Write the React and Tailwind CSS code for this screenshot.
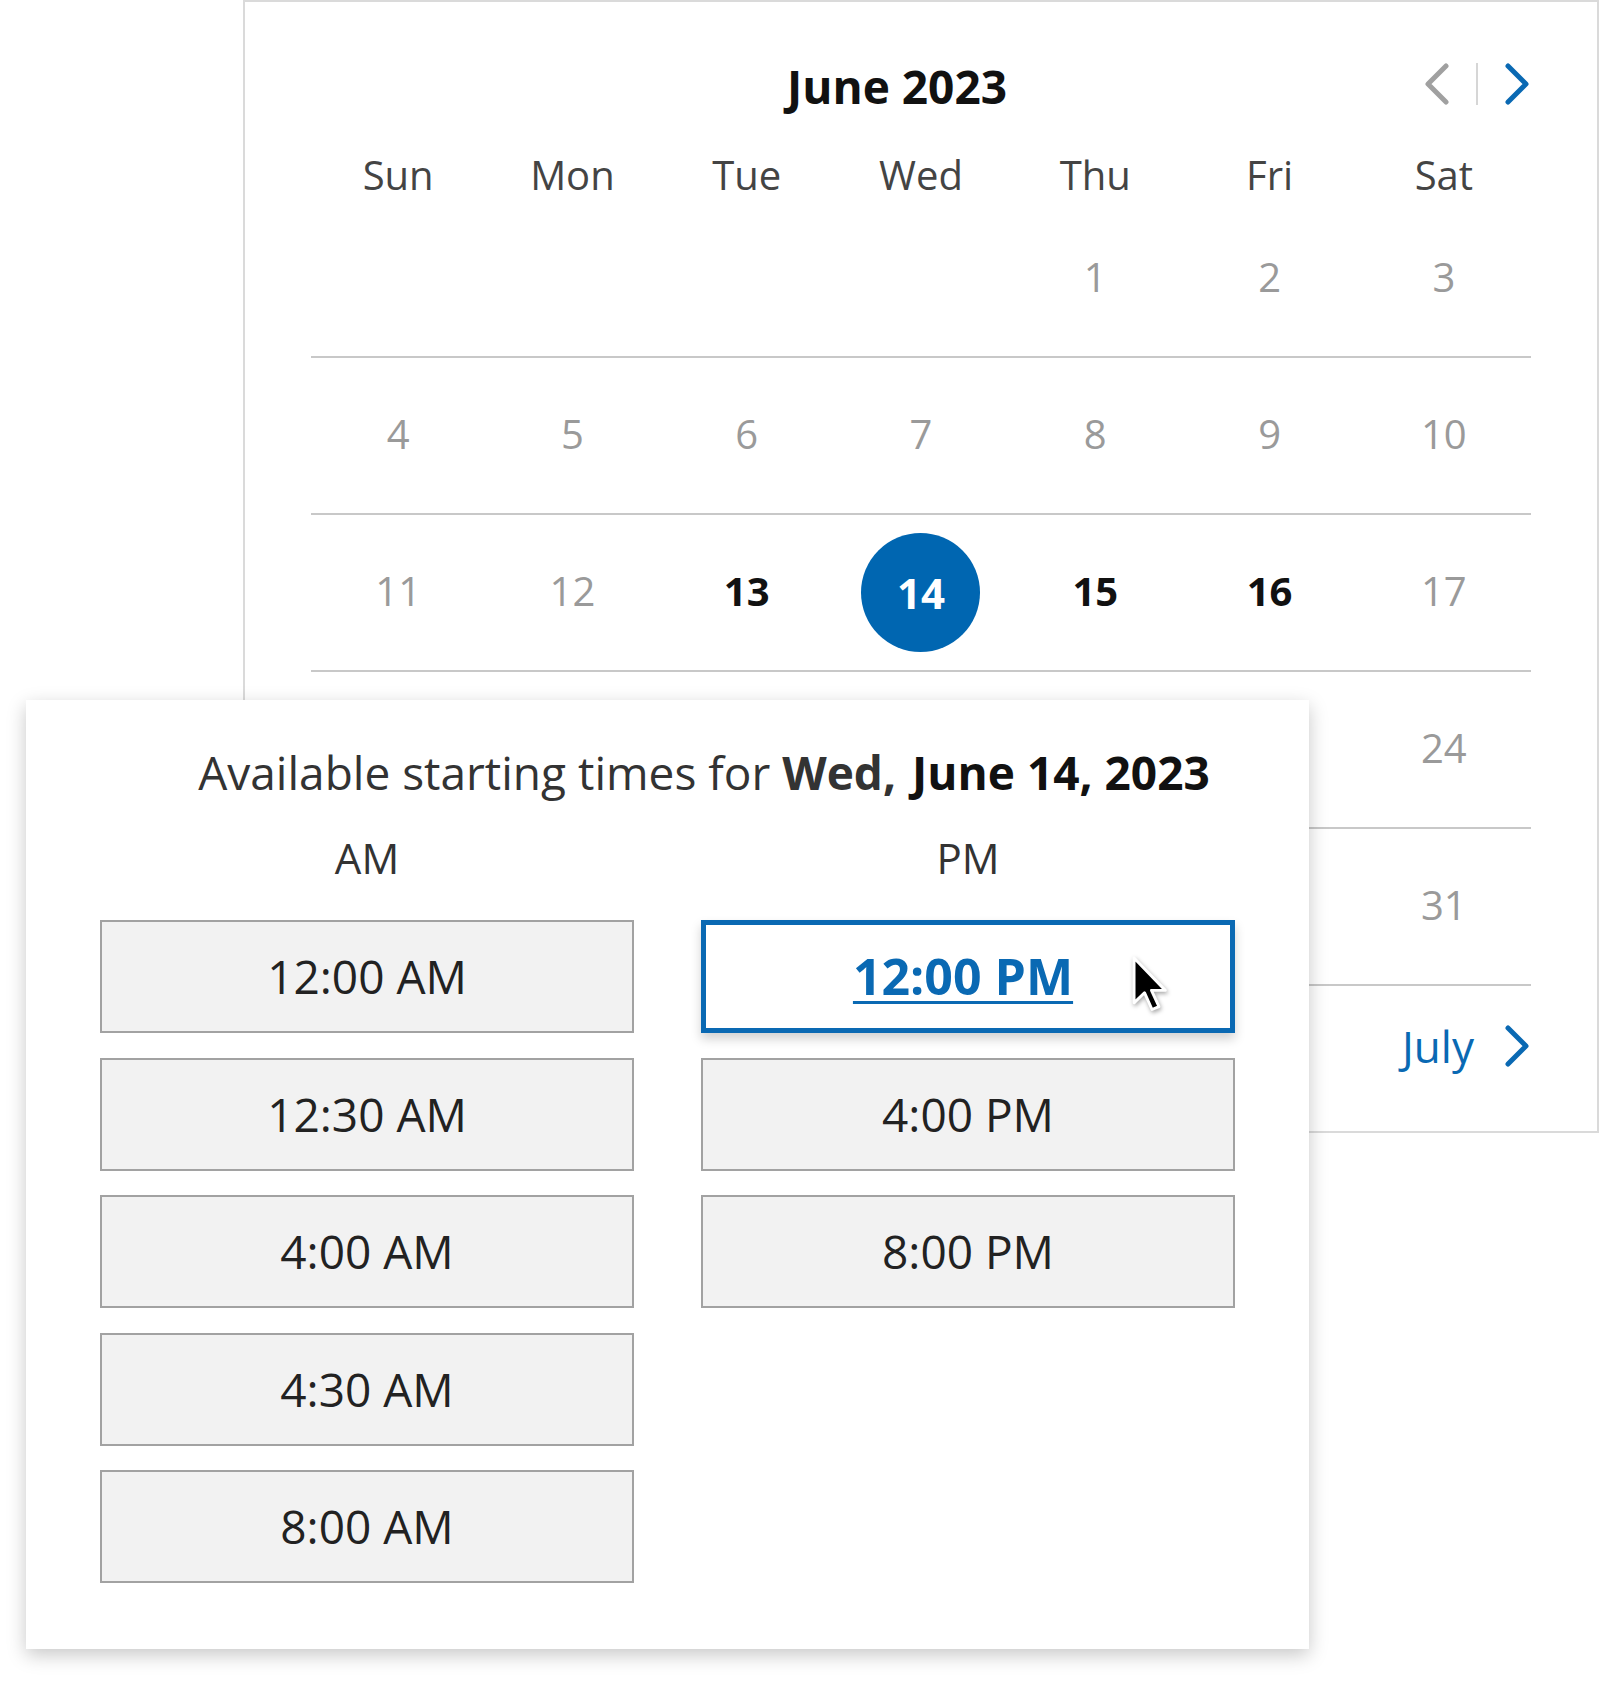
import React from 'react';

const DAYS = ['Sun', 'Mon', 'Tue', 'Wed', 'Thu', 'Fri', 'Sat'];

// null = empty cell (or covered by the popover); kind: 'off' (grey), 'open' (bold), 'sel' (selected)
const WEEKS = [
    [null, null, null, null, [1, 'off'], [2, 'off'], [3, 'off']],
    [[4, 'off'], [5, 'off'], [6, 'off'], [7, 'off'], [8, 'off'], [9, 'off'], [10, 'off']],
    [[11, 'off'], [12, 'off'], [13, 'open'], [14, 'sel'], [15, 'open'], [16, 'open'], [17, 'off']],
    [null, null, null, null, null, null, [24, 'off']],
    [null, null, null, null, null, null, [31, 'off']],
];

const AM_TIMES = ['12:00 AM', '12:30 AM', '4:00 AM', '4:30 AM', '8:00 AM'];
const PM_TIMES = ['12:00 PM', '4:00 PM', '8:00 PM'];

const Chevron = ({ dir = 'right', color }) => (
    <svg width="27" height="42" viewBox="0 0 27 42" fill="none">
        <path
            d={dir === 'right' ? 'M4 3 L22 21 L4 39' : 'M23 3 L5 21 L23 39'}
            stroke={color}
            strokeWidth="5"
            strokeLinecap="round"
            strokeLinejoin="round"
        />
    </svg>
);

const Cursor = () => (
    <svg width="38" height="58" viewBox="0 0 13 20" className="drop-shadow-[1px_2px_2px_rgba(0,0,0,0.35)]">
        <path
            d="M1 1 L1 16.5 L4.6 13 L7.2 18.8 L9.6 17.8 L7 12.2 L11.8 12.2 Z"
            fill="#000"
            stroke="#fff"
            strokeWidth="1"
            strokeLinejoin="round"
        />
    </svg>
);

const DayCell = ({ cell }) => {
    if (!cell) return <div />;
    const [num, kind] = cell;
    if (kind === 'sel') {
        return (
            <div className="flex justify-center">
                <div className="w-[119px] h-[119px] rounded-full bg-[#0066b1] flex items-center justify-center text-white font-bold text-[42px]">
                    {num}
                </div>
            </div>
        );
    }
    return (
        <div className={`text-center text-[40px] -translate-y-[2px] ${kind === 'open' ? 'font-bold text-[#111]' : 'text-[#9a9a9a]'}`}>
            {num}
        </div>
    );
};

const TimeButton = ({ label, selected }) => {
    if (selected) {
        return (
            <div className="relative h-[113px] border-[5px] border-[#0a69b3] bg-white shadow-[0_6px_10px_rgba(0,0,0,0.18)] flex items-center justify-center">
                <span className="text-[50px] font-bold text-[#0a69b3] underline decoration-[3px] underline-offset-[6px] -translate-x-[5px]">{label}</span>
                <div className="absolute left-[425px] top-[30px]">
                    <Cursor />
                </div>
            </div>
        );
    }
    return (
        <div className="h-[113px] border-2 border-[#a2a2a2] bg-[#f2f2f2] flex items-center justify-center text-[46px] text-[#222]">
            {label}
        </div>
    );
};

export default function App() {
    return (
        <div className="relative w-[1600px] h-[1682px] bg-white overflow-hidden font-['Open_Sans',sans-serif]">
            {/* month calendar */}
            <div className="ml-[243px] w-[1356px] h-[1133px] border-2 border-[#dadada] bg-white px-[66px] pt-[39px]">
                <div className="flex items-center h-[90px]">
                    <div className="flex-1 pl-[60px] text-center text-[46px] font-bold text-[#111]">June 2023</div>
                    <div className="flex items-center -translate-y-[2px]">
                        <Chevron dir="left" color="#a0a0a0" />
                        <div className="w-[2px] h-[42px] bg-[#d6d6d6] mx-[26px]" />
                        <Chevron dir="right" color="#0a69b3" />
                    </div>
                </div>

                <div className="grid grid-cols-7 h-[70px] pt-[22px]">
                    {DAYS.map(d => (
                        <div key={d} className="text-center text-[40px] leading-[44px] text-[#444]">{d}</div>
                    ))}
                </div>

                {WEEKS.map((week, i) => (
                    <div key={i} className="grid grid-cols-7 items-center h-[157px] border-b-2 border-[#c8c8c8]">
                        {week.map((cell, j) => <DayCell key={j} cell={cell} />)}
                    </div>
                ))}

                <div className="flex items-center justify-end h-[120px] gap-[30px]">
                    <span className="text-[44px] text-[#0a69b3]">July</span>
                    <Chevron dir="right" color="#0a69b3" />
                </div>
            </div>

            {/* time picker popover */}
            <div className="absolute left-[26px] top-[700px] w-[1283px] h-[949px] bg-white shadow-[0_6px_18px_rgba(0,0,0,0.22)] px-[74px] pt-[42px]">
                <div className="text-center text-[46px] leading-[60px] text-[#333] pl-[73px]">
                    Available starting times for <span className="font-bold">Wed,</span>
                    <span className="font-bold text-[#111] ml-[16px]">June 14, 2023</span>
                </div>

                <div className="grid grid-cols-2 gap-x-[67px] mt-[28px]">
                    <div className="flex flex-col">
                        <div className="text-center text-[42px] leading-[56px] text-[#333]">AM</div>
                        <div className="flex flex-col gap-[24.5px] mt-[34px]">
                            {AM_TIMES.map(t => <TimeButton key={t} label={t} />)}
                        </div>
                    </div>
                    <div className="flex flex-col">
                        <div className="text-center text-[42px] leading-[56px] text-[#333]">PM</div>
                        <div className="flex flex-col gap-[24.5px] mt-[34px]">
                            {PM_TIMES.map((t, i) => <TimeButton key={t} label={t} selected={i === 0} />)}
                        </div>
                    </div>
                </div>
            </div>
        </div>
    );
}
